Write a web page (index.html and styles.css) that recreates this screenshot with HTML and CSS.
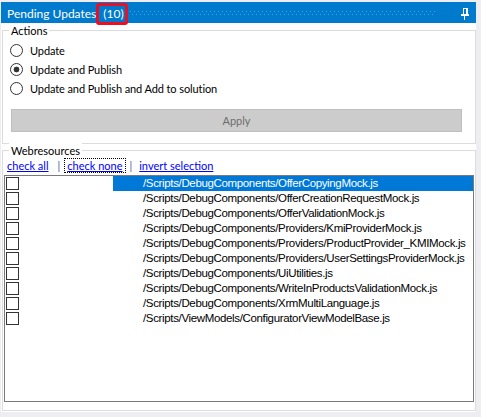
FILE: index.html
```html
<!DOCTYPE html>
<html>
<head>
<meta charset="utf-8">
<link rel="stylesheet" href="styles.css">
</head>
<body>
<div class="window">
  <div class="titlebar">
    <div class="titles">
      <span class="title">Pending Updates</span>
      <span class="count">(10)</span>
    </div>
    <div class="grip"></div>
    <svg class="pin" width="10" height="12" viewBox="0 0 10 12">
      <rect x="3" y="0" width="5" height="1" fill="#fff"/>
      <rect x="3" y="0" width="1" height="7" fill="#fff"/>
      <rect x="6" y="0" width="2" height="7" fill="#fff"/>
      <rect x="1" y="6" width="8" height="2" fill="#fff"/>
      <rect x="4" y="8" width="1" height="4" fill="#fff"/>
    </svg>
    <span class="mark"></span>
  </div>
  <div class="panel">
    <div class="group actions">
      <div class="legend">Actions</div>
      <div class="radios">
        <div class="radio"><span class="circle"></span><span class="rlabel">Update</span></div>
        <div class="radio"><span class="circle on"></span><span class="rlabel">Update and Publish</span></div>
        <div class="radio"><span class="circle"></span><span class="rlabel">Update and Publish and Add to solution</span></div>
      </div>
      <button class="apply" disabled>Apply</button>
    </div>
    <div class="group webres">
      <div class="legend">Webresources</div>
      <div class="links">
        <span class="link">check all</span>
        <span class="sep">|</span>
        <span class="focus"><span class="link">check none</span></span>
        <span class="sep sep2">|</span>
        <span class="link">invert selection</span>
      </div>
      <div class="list">
        <div class="row sel"><span class="check"></span><span class="name">/Scripts/DebugComponents/OfferCopyingMock.js</span></div>
        <div class="row"><span class="check"></span><span class="name">/Scripts/DebugComponents/OfferCreationRequestMock.js</span></div>
        <div class="row"><span class="check"></span><span class="name">/Scripts/DebugComponents/OfferValidationMock.js</span></div>
        <div class="row"><span class="check"></span><span class="name">/Scripts/DebugComponents/Providers/KmiProviderMock.js</span></div>
        <div class="row"><span class="check"></span><span class="name">/Scripts/DebugComponents/Providers/ProductProvider_KMIMock.js</span></div>
        <div class="row"><span class="check"></span><span class="name">/Scripts/DebugComponents/Providers/UserSettingsProviderMock.js</span></div>
        <div class="row"><span class="check"></span><span class="name">/Scripts/DebugComponents/UiUtilities.js</span></div>
        <div class="row"><span class="check"></span><span class="name">/Scripts/DebugComponents/WriteInProductsValidationMock.js</span></div>
        <div class="row"><span class="check"></span><span class="name">/Scripts/DebugComponents/XrmMultiLanguage.js</span></div>
        <div class="row"><span class="check"></span><span class="name">/Scripts/ViewModels/ConfiguratorViewModelBase.js</span></div>
      </div>
    </div>
  </div>
</div>
</body>
</html>
```

FILE: styles.css
```css
html, body {
  margin: 0;
  padding: 0;
}
body {
  background: #eeeef2;
  width: 481px;
  height: 417px;
  overflow: hidden;
  font-family: Lato, "Noto Sans", sans-serif;
  font-size: 11px;
  color: #000;
}
.window {
  margin: 2px 0 0 1px;
  width: 475px;
}
.titlebar {
  position: relative;
  height: 21px;
  background: #007acc;
  color: #fff;
  display: flex;
  align-items: center;
}
.titles {
  flex: 0 0 129px;
  display: flex;
  padding-left: 6px;
  box-sizing: border-box;
  font-size: 12px;
  line-height: 15px;
  padding-top: 2px;
  white-space: nowrap;
}
.title, .count {
  flex: none;
}
.count {
  margin-left: 7px;
}
.grip {
  flex: 1;
  align-self: flex-start;
  margin: 9px 25px 0 0;
  height: 5px;
  background-image:
    linear-gradient(90deg, #4aa0e0 1px, transparent 1px),
    linear-gradient(90deg, #4aa0e0 1px, transparent 1px);
  background-size: 4px 1px, 4px 1px;
  background-repeat: repeat-x, repeat-x;
  background-position: 0 0, 2px 3px;
}
.pin {
  flex: none;
  margin-right: 6px;
  align-self: flex-start;
  margin-top: 6px;
}
.mark {
  position: absolute;
  left: 95px;
  top: 1px;
  width: 32px;
  height: 22px;
  box-sizing: border-box;
  border: 3px solid #e81123;
  border-radius: 3px;
}
.panel {
  background: #fff;
  height: 389px;
  box-sizing: border-box;
  padding: 7px 0 0 1px;
}
.group {
  border: 1px solid #dcdcdc;
  width: 474px;
  box-sizing: border-box;
}
.actions {
  height: 114px;
}
.webres {
  height: 261px;
  margin-top: 6px;
}
.legend {
  width: fit-content;
  margin: -8px 0 0 6px;
  padding: 0 2px;
  background: #fff;
  line-height: 15px;
}
.radios {
  margin-top: 3px;
}
.radio {
  display: flex;
  align-items: center;
  height: 19px;
  padding-left: 7px;
  gap: 7px;
  line-height: 15px;
  letter-spacing: -0.1px;
}
.circle {
  flex: none;
  width: 13px;
  height: 13px;
  box-sizing: border-box;
  border: 1px solid #333;
  border-radius: 50%;
  background: #fff;
}
.circle.on {
  background: radial-gradient(circle, #333 0, #333 2.6px, #fff 3.2px);
}
.apply {
  display: block;
  margin: 11px 0 0 8px;
  width: 451px;
  height: 23px;
  padding: 0;
  background: #cccccc;
  border: 1px solid #bfbfbf;
  color: #6d6d6d;
  font-family: inherit;
  font-size: 11px;
}
.links {
  display: flex;
  align-items: center;
  height: 15px;
  line-height: 13px;
  padding-left: 4px;
}
.link {
  color: #0000ff;
  text-decoration: underline;
}
.sep {
  color: #4a5a9a;
  margin: 0 4px 0 9px;
}
.sep2 {
  margin: 0 7px 0 3px;
}
.focus {
  border: 1px dotted #000;
  padding: 0 3px 0 2px;
}
.list {
  margin: 2px 0 0 1px;
  width: 470px;
  height: 227px;
  border: 1px solid #7a7a7a;
  box-sizing: border-box;
  font-family: "Liberation Sans", Arial, sans-serif;
  font-size: 11.5px;
  letter-spacing: -0.35px;
}
.row {
  display: flex;
  height: 15px;
  line-height: 15px;
}
.check {
  flex: none;
  width: 13px;
  height: 13px;
  margin: 1px 0 0 1px;
  border: 1px solid #333;
  box-sizing: border-box;
  background: #fff;
}
.name {
  flex: 1;
  margin-left: 94px;
  padding-left: 30px;
  white-space: nowrap;
}
.row.sel .name {
  background: #0078d7;
  color: #fff;
}
```
